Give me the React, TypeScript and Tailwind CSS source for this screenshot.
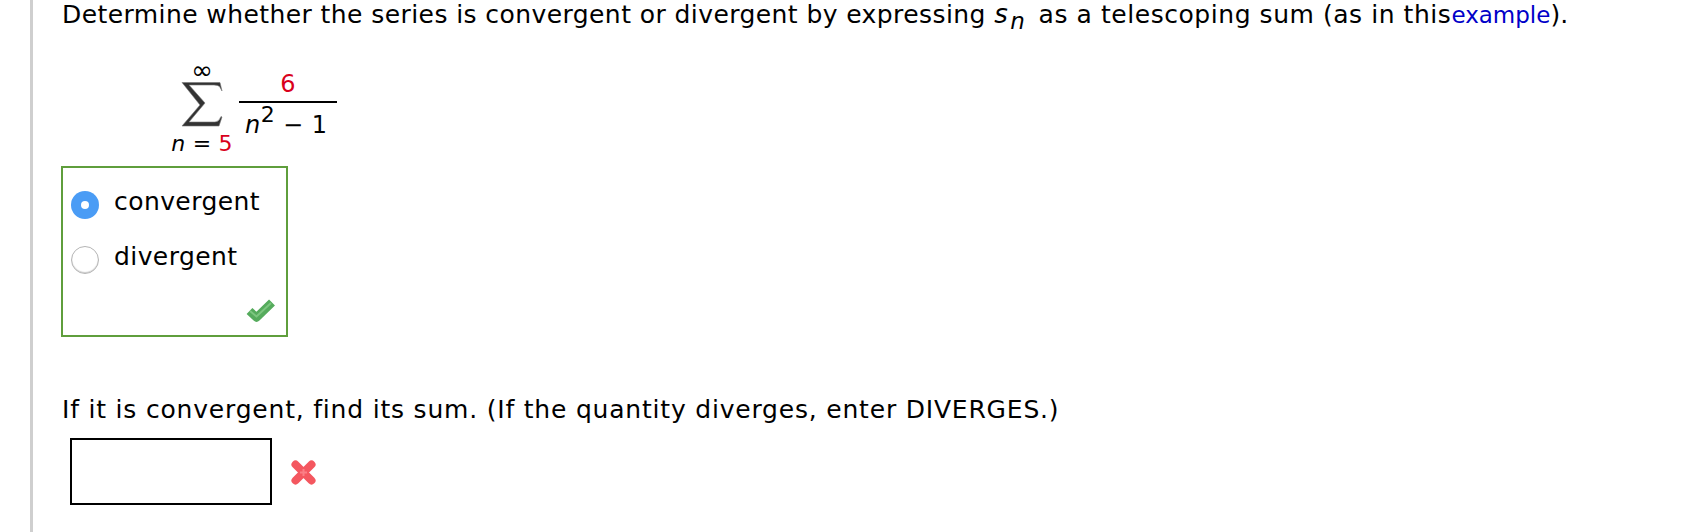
const font = { fontFamily: '"DejaVu Sans", Verdana, sans-serif' };

function Sigma() {
  return (
    <svg width="42" height="46" viewBox="0 0 42 46" className="block">
      <path
        d="M1 1.5H39L41 10L38.5 5.5Q37 4 33 4H8L24 22L8 41H34Q38 41 40 35.5L41 36L38 45H1L19 24Z"
        fill="#333"
        stroke="#777"
        strokeWidth="0.6"
      />
    </svg>
  );
}

function Check() {
  return (
    <svg width="31" height="25" viewBox="0 0 31 25" className="blur-[0.5px]">
      <path d="M4.5 13L11.5 19.5L27 4.5" fill="none" stroke="#55ab5c" strokeWidth="8.5" strokeLinejoin="round" />
      <path d="M5 13L11.5 18.5L26 5" fill="none" stroke="#7cc67f" strokeWidth="2" />
    </svg>
  );
}

function Cross() {
  return (
    <svg width="25" height="25" viewBox="0 0 25 25" className="blur-[0.5px]">
      <path d="M4.5 4.5L20.5 20.5M20.5 4.5L4.5 20.5" fill="none" stroke="#f4575f" strokeWidth="8" strokeLinecap="round" />
      <path d="M9 12.5H16M12.5 9V16" fill="none" stroke="#fb7f85" strokeWidth="2" />
    </svg>
  );
}

function Radio({ checked, label }: { checked?: boolean; label: string }) {
  return (
    <div className="flex h-[55px] items-center">
      {checked ? (
        <span className="flex h-7 w-7 items-center justify-center rounded-full bg-[#4a9cf5]">
          <span className="h-2 w-2 rounded-full bg-white" />
        </span>
      ) : (
        <span className="h-7 w-7 rounded-full border border-[#b5b5b5] bg-white shadow-[inset_0_-1px_1px_#ccc]" />
      )}
      <span className="ml-[15px] -mt-[5px]">{label}</span>
    </div>
  );
}

export default function App() {
  return (
    <div
      className="h-[532px] w-[1694px] overflow-hidden bg-white text-[25px] leading-[30px] tracking-[0.42px] text-black"
      style={font}
    >
      <div className="ml-[30px] h-full border-l-[3px] border-[#cfcfcf] pl-[29px]">
        <p className="h-[30px] whitespace-nowrap">
          Determine whether the series is convergent or divergent by expressing{" "}
          <i className="mr-[5px] text-[26px] leading-none">
            s<sub className="ml-[2px] text-[23px] leading-none">n</sub>
          </i>{" "}
          <span className="tracking-[0.55px]">as a telescoping sum (as in this</span>
          <span className="text-[23px] tracking-normal text-[#0000c8]">example</span>
          <span className="tracking-normal">).</span>
        </p>

        <div className="mt-[31px] ml-[104px] flex h-[93px] w-fit items-start">
          <div className="flex w-[72px] flex-col items-center text-[22px] leading-[22px] tracking-normal">
            <span className="h-[20px] text-[26px] leading-[18px]">∞</span>
            <Sigma />
            <span className="mt-[6px] whitespace-nowrap tracking-[0.2px]">
              <i>n</i> = <span className="text-[#d9001b]">5</span>
            </span>
          </div>
          <div className="ml-[1px] mt-[8px] flex w-[98px] flex-col items-center text-[24px] leading-[30px]">
            <span className="h-[32px] text-[#d9001b]">6</span>
            <span className="h-[36px] w-full whitespace-nowrap border-t-2 border-black pl-[6px] pt-[7px]">
              <i>n</i>
              <sup className="text-[22px] leading-none">2</sup> − 1
            </span>
          </div>
        </div>

        <div className="-ml-px mt-[12px] h-[171px] w-[227px] border-2 border-[#5f9e3c] px-[8px] pt-[9px]">
          <Radio checked label="convergent" />
          <Radio label="divergent" />
          <div className="mt-[11px] flex justify-end pr-[2px]">
            <Check />
          </div>
        </div>

        <p className="mt-[58px] whitespace-nowrap tracking-[0.8px]">
          If it is convergent, find its sum. (If the quantity diverges, enter DIVERGES.)
        </p>

        <div className="mt-[13px] ml-[8px] flex items-center">
          <div className="h-[67px] w-[202px] border-2 border-black bg-white" />
          <span className="ml-[19px] mt-[2px]">
            <Cross />
          </span>
        </div>
      </div>
    </div>
  );
}
